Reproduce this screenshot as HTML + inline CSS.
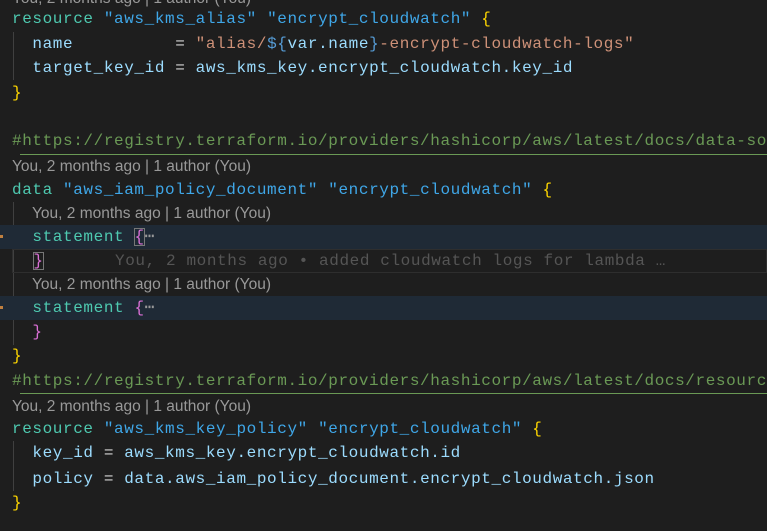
<!DOCTYPE html>
<html><head><meta charset="utf-8"><style>
html,body{margin:0;padding:0;background:#1e1e1e;width:767px;height:531px;overflow:hidden;position:relative}
.l{position:absolute;left:0;width:767px;height:24px;line-height:24px;font-family:"Liberation Mono",monospace;font-size:16px;letter-spacing:0.6px;white-space:pre;color:#d4d4d4;padding-left:12px;box-sizing:border-box;overflow:hidden}
.c{position:absolute;left:12px;height:22px;line-height:22px;font-family:"Liberation Sans",sans-serif;font-size:15.5px;color:#999;white-space:pre}
.k{color:#4ec9b0}.s{color:#3fa7e8}.v{color:#ce9178}.a{color:#9cdcfe}.y{color:#ffd700}.p{color:#da70d6}.g{color:#6a9955}.i{color:#569cd6}
.hl{background:#1f2a36}
.ul{position:absolute;left:20px;right:0;height:1px;background:#6a9955}
.guide{position:absolute;left:13px;width:1px;background:#404040}
</style></head><body>
<div class="c" style="top:-12px">You, 2 months ago | 1 author (You)</div>
<div class="l" style="top:7px"><span class="k">resource</span> <span class="s">"aws_kms_alias"</span> <span class="s">"encrypt_cloudwatch"</span> <span class="y">{</span></div>
<div class="guide" style="top:32px;height:48px"></div>
<div class="l" style="top:32px">  <span class="a">name</span>          = <span class="v">"alias/</span><span class="i">${</span><span class="a">var.name</span><span class="i">}</span><span class="v">-encrypt-cloudwatch-logs"</span></div>
<div class="l" style="top:56px">  <span class="a">target_key_id</span> = <span class="a">aws_kms_key.encrypt_cloudwatch.key_id</span></div>
<div class="l" style="top:81px"><span class="y">}</span></div>
<div class="l g" style="top:129px">#https://registry.terraform.io/providers/hashicorp/aws/latest/docs/data-sources/iam_policy_document</div>
<div class="ul" style="top:154px"></div>
<div class="c" style="top:156px">You, 2 months ago | 1 author (You)</div>
<div class="l" style="top:178px"><span class="k">data</span> <span class="s">"aws_iam_policy_document"</span> <span class="s">"encrypt_cloudwatch"</span> <span class="y">{</span></div>
<div class="guide" style="top:202px;height:143px"></div>
<div class="c" style="top:203px;left:32px">You, 2 months ago | 1 author (You)</div>
<div class="l hl" style="top:225px">  <span class="k">statement</span> <span class="p" style="outline:1px solid #777;outline-offset:-1px">{</span><span style="color:#999">⋯</span></div>
<div class="l" style="top:249px;left:12px;width:755px;padding-left:0;border:1px solid #2e2e2e;line-height:22px">  <span class="p" style="outline:1px solid #777;outline-offset:-1px">}</span>       <span style="color:#555">You, 2 months ago • added cloudwatch logs for lambda …</span></div>
<div class="c" style="top:274px;left:32px">You, 2 months ago | 1 author (You)</div>
<div class="l hl" style="top:296px">  <span class="k">statement</span> <span class="p">{</span><span style="color:#999">⋯</span></div>
<div class="l" style="top:320px">  <span class="p">}</span></div>
<div class="l" style="top:344px"><span class="y">}</span></div>
<div class="l g" style="top:369px">#https://registry.terraform.io/providers/hashicorp/aws/latest/docs/resources/kms_key_policy</div>
<div class="ul" style="top:393px"></div>
<div class="c" style="top:396px">You, 2 months ago | 1 author (You)</div>
<div class="l" style="top:417px"><span class="k">resource</span> <span class="s">"aws_kms_key_policy"</span> <span class="s">"encrypt_cloudwatch"</span> <span class="y">{</span></div>
<div class="guide" style="top:441px;height:50px"></div>
<div class="l" style="top:441px">  <span class="a">key_id</span> = <span class="a">aws_kms_key.encrypt_cloudwatch.id</span></div>
<div class="l" style="top:467px">  <span class="a">policy</span> = <span class="a">data.aws_iam_policy_document.encrypt_cloudwatch.json</span></div>
<div class="l" style="top:491px"><span class="y">}</span></div>
<div style="position:absolute;left:0;top:235px;width:3px;height:3px;background:#c08040"></div>
<div style="position:absolute;left:0;top:306px;width:3px;height:3px;background:#c08040"></div>
</body></html>
